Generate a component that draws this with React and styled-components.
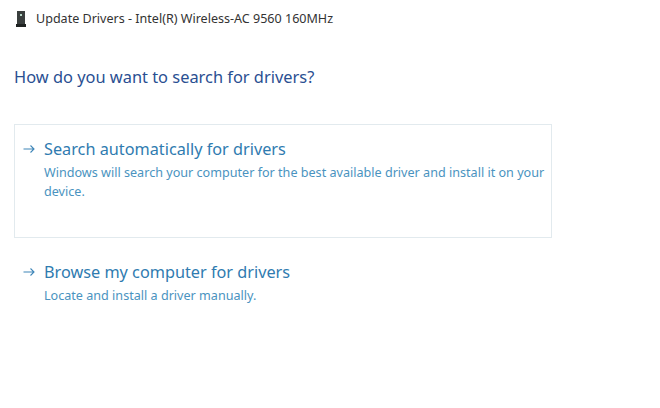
import React from 'react';
import styled, { createGlobalStyle } from 'styled-components';

const GlobalStyle = createGlobalStyle`
  html, body {
    margin: 0;
    padding: 0;
    background: #fff;
    font-family: "Noto Sans", "Open Sans", sans-serif;
  }
`;

const Page = styled.div`
  width: 660px;
  height: 408px;
  box-sizing: border-box;
  padding: 10px 108px 0 14px;
  overflow: hidden;
`;

const TitleBar = styled.div`
  display: flex;
  align-items: center;
  gap: 10px;
  height: 18px;
  padding-left: 2px;
`;

const TitleText = styled.span`
  font-size: 12.55px;
  line-height: 18px;
  color: #333;
  white-space: nowrap;
`;

const Heading = styled.h1`
  margin: 37px 0 0;
  font-size: 16.4px;
  font-weight: 400;
  line-height: 24px;
  color: #2a4f92;
`;

const Option = styled.div`
  display: flex;
  gap: 9px;
  box-sizing: border-box;
  padding: ${props => props.$boxed ? '12px 6px 0 8px' : '0 6px 0 9px'};
  margin-top: ${props => props.$boxed ? '35px' : '22px'};
  height: ${props => props.$boxed ? '114px' : 'auto'};
  border: ${props => props.$boxed ? '1px solid #e2eaee' : 'none'};
`;

const Arrow = styled.svg`
  flex: none;
  width: 12px;
  height: 10px;
  margin-top: 7px;
  fill: none;
  stroke: #3f86b8;
  stroke-width: 1.1;
`;

const OptionBody = styled.div`
  min-width: 0;
`;

const OptionTitle = styled.div`
  font-size: 16.25px;
  line-height: 24px;
  color: #2f7bb0;
  white-space: nowrap;
`;

const OptionText = styled.div`
  font-size: 12.6px;
  line-height: 19px;
  margin-top: 2px;
  color: #4a93c0;
`;

const DeviceIcon = () => (
  <svg width="10" height="16" viewBox="0 0 10 16" aria-hidden="true">
    <rect x="1" y="0" width="8" height="13" fill="#3a3f3e" />
    <rect x="0" y="13" width="10" height="3" fill="#1f2322" />
    <rect x="4" y="3" width="2" height="2" fill="#b5d8c8" />
  </svg>
);

const ArrowIcon = () => (
  <Arrow viewBox="0 0 12 10" aria-hidden="true">
    <path d="M0.5 5H11M7.5 1.5L11 5L7.5 8.5" />
  </Arrow>
);

const options = [
  {
    title: 'Search automatically for drivers',
    text: 'Windows will search your computer for the best available driver and install it on your device.',
    boxed: true,
  },
  {
    title: 'Browse my computer for drivers',
    text: 'Locate and install a driver manually.',
    boxed: false,
  },
];

export default function App() {
  return (
    <Page>
      <GlobalStyle />
      <TitleBar>
        <DeviceIcon />
        <TitleText>Update Drivers - Intel(R) Wireless-AC 9560 160MHz</TitleText>
      </TitleBar>
      <Heading>How do you want to search for drivers?</Heading>
      {options.map(option => (
        <Option key={option.title} $boxed={option.boxed}>
          <ArrowIcon />
          <OptionBody>
            <OptionTitle>{option.title}</OptionTitle>
            <OptionText>{option.text}</OptionText>
          </OptionBody>
        </Option>
      ))}
    </Page>
  );
}
